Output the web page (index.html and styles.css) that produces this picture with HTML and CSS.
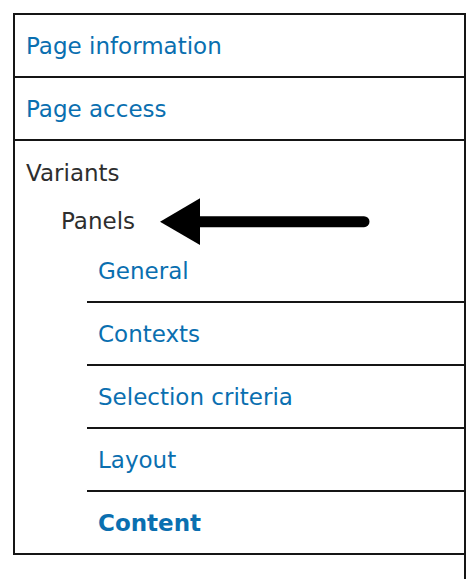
FILE: index.html
```html
<!DOCTYPE html>
<html lang="en">
<head>
<meta charset="utf-8">
<title>Panels menu</title>
<link rel="stylesheet" href="styles.css">
</head>
<body>
<div class="layout">
  <nav class="menu">
    <ul class="menu-list">
      <li class="row"><a class="link" href="#">Page information</a></li>
      <li class="row"><a class="link" href="#">Page access</a></li>
      <li class="group">
        <span class="label">Variants</span>
        <ul class="sub">
          <li class="sub-group">
            <span class="label">Panels</span>
            <ul class="sub-items">
              <li class="row"><a class="link" href="#">General</a></li>
              <li class="row"><a class="link" href="#">Contexts</a></li>
              <li class="row"><a class="link" href="#">Selection criteria</a></li>
              <li class="row"><a class="link" href="#">Layout</a></li>
              <li class="row last"><a class="link active" href="#">Content</a></li>
            </ul>
          </li>
        </ul>
      </li>
    </ul>
  </nav>
  <svg class="arrow" width="216" height="52" viewBox="0 0 216 52" aria-hidden="true">
    <line x1="42" y1="25.7" x2="206" y2="25.7" stroke="#000" stroke-width="11" stroke-linecap="round"/>
    <polygon points="2,25.7 42,2.3 42,49" fill="#000"/>
  </svg>
</div>
</body>
</html>
```
FILE: styles.css
```css
html, body {
  margin: 0;
  padding: 0;
  background: #fff;
}

body {
  font-family: "DejaVu Sans", Verdana, sans-serif;
  font-size: 23px;
  color: #333;
}

.layout {
  position: relative;
  margin: 13px 0 0 13px;
  width: 451px;
  min-height: calc(100vh - 13px);
  border-right: 2px solid #151515;
}

.menu {
  border: 2px solid #151515;
  border-right: 0;
}

.menu-list,
.sub,
.sub-items {
  list-style: none;
  margin: 0;
  padding: 0;
}

.row {
  border-bottom: 2px solid #151515;
}

.row.last {
  border-bottom: 0;
}

.link {
  display: block;
  padding: 18px 0 16px 11px;
  line-height: 27px;
  color: #0a6fb0;
  text-decoration: none;
}

.link.active {
  font-weight: bold;
}

.group {
  padding: 19px 0 0 11px;
}

.label {
  display: block;
  line-height: 27px;
  color: #2e2e2e;
}

.sub {
  margin: 21px 0 0 35px;
}

.sub-group > .label {
  margin-bottom: 5px;
}

.sub-items {
  margin-left: 26px;
  margin-right: 0;
}

.sub-items .link {
  padding-left: 11px;
}

.arrow {
  position: absolute;
  left: 145px;
  top: 183px;
}
```
